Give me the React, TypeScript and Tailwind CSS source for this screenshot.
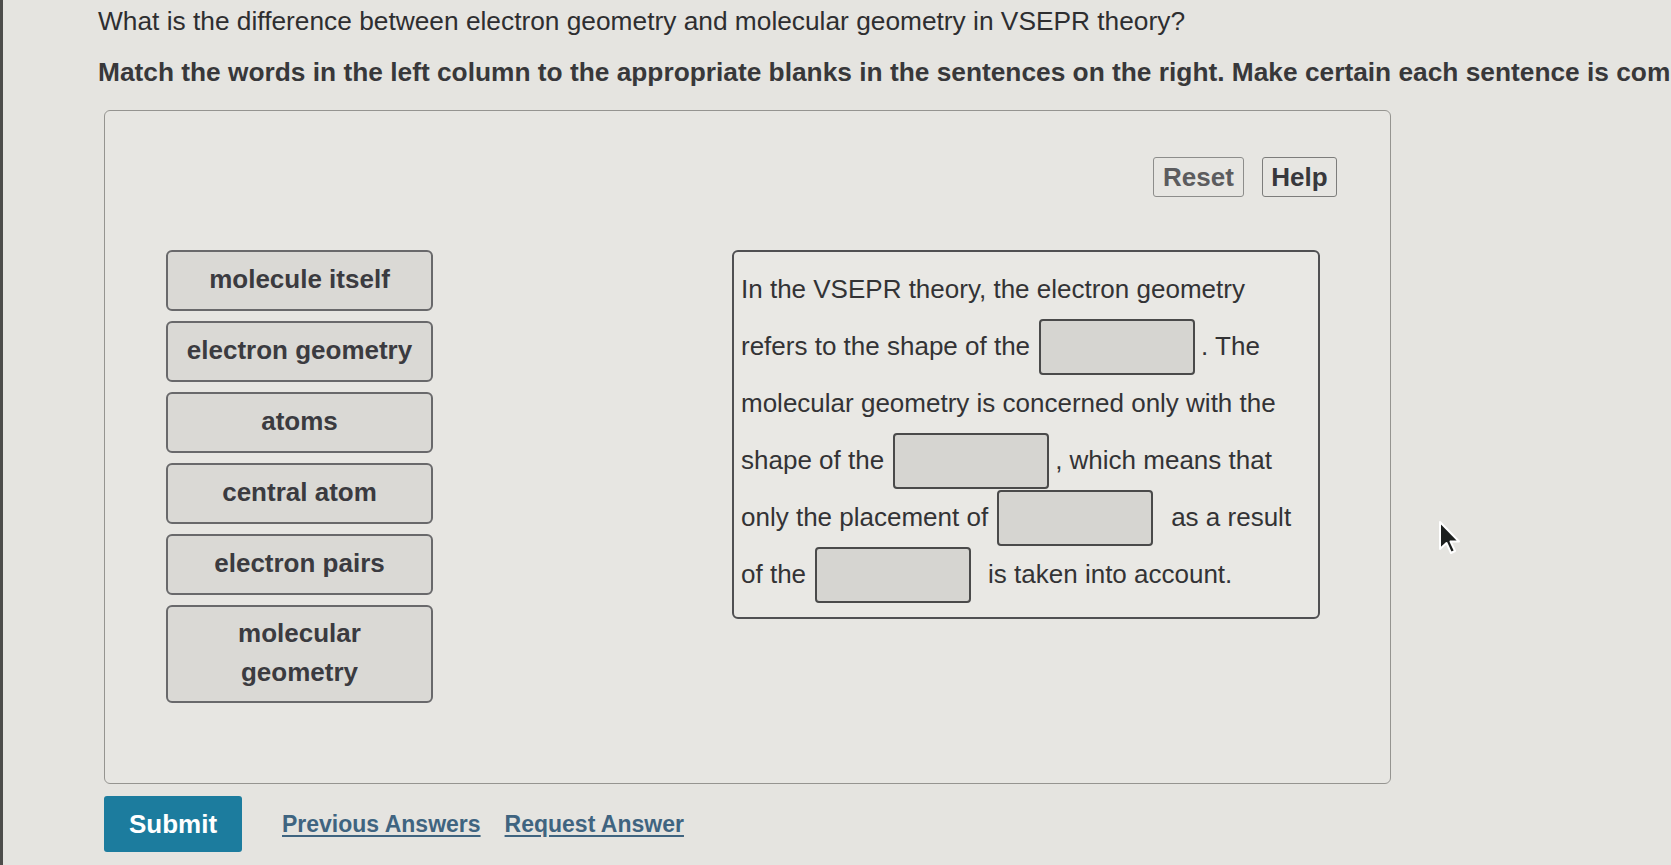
import React from 'react';

const items = ['molecule itself', 'electron geometry', 'atoms', 'central atom', 'electron pairs'];

function Blank({ after }: { after: number }) {
  return (
    <span
      className="ml-[9px] inline-block h-[56px] w-[156px] shrink-0 rounded-[4px] border-2 border-[#4a4a4a] bg-[#d6d5d1]"
      style={{ marginRight: after }}
    />
  );
}

function Line({ children }: { children: React.ReactNode }) {
  return <div className="flex h-[57px] items-center whitespace-pre">{children}</div>;
}

function Cursor() {
  return (
    <svg className="absolute left-[1434px] top-[520px]" width="26" height="38" viewBox="0 0 26 38">
      <path
        d="M3 2 L3 29 L9.5 23 L14 33 L18 31 L13.5 21.5 L22 21.5 Z"
        fill="#1c1f1e"
        stroke="#ffffff"
        strokeWidth="2"
        strokeLinejoin="round"
      />
    </svg>
  );
}

export default function App() {
  return (
    <div
      className="relative h-[865px] w-[1671px] overflow-hidden border-l-[3px] border-[#4d4d4b] bg-[#e5e4e0] text-[#2e2e30]"
      style={{ fontFamily: '"Liberation Sans", Arial, sans-serif' }}
    >
      <div className="pl-[95px] pt-[6px]">
        <h1 className="whitespace-nowrap text-[26.3px] leading-[30px]">
          What is the difference between electron geometry and molecular geometry in VSEPR theory?
        </h1>
        <p className="mt-[21px] whitespace-nowrap text-[26.3px] font-bold leading-[30px] text-[#38383a]">
          Match the words in the left column to the appropriate blanks in the sentences on the right. Make certain each sentence is complete before submitting your answer.
        </p>
      </div>

      <div className="ml-[101px] mt-[23px] h-[674px] w-[1287px] rounded-md border-[1.5px] border-[#959490] bg-[#e7e6e2]">
        <div className="flex justify-end gap-[18px] pr-[53px] pt-[46px]">
          <button className="h-[40px] w-[91px] rounded-[3px] border-[1.5px] border-[#8d8d8b] text-[26px] font-bold text-[#5c5c5e]">
            Reset
          </button>
          <button className="h-[40px] w-[75px] rounded-[3px] border-[1.5px] border-[#7d7d7b] text-[26px] font-bold text-[#38383c]">
            Help
          </button>
        </div>

        <div className="mt-[53px] flex pl-[61px]">
          <div className="flex w-[267px] flex-col gap-[10px]">
            {items.map((t) => (
              <div
                key={t}
                className="flex h-[61px] items-center justify-center rounded-md border-2 border-[#69696b] bg-[#dad9d5] pb-[2px] text-[26px] font-bold text-[#3b3b40]"
              >
                {t}
              </div>
            ))}
            <div className="flex h-[98px] flex-col items-center justify-center rounded-md border-2 border-[#69696b] bg-[#dad9d5] pb-[2px] text-[26px] font-bold leading-[39px] text-[#3b3b40]">
              <span>molecular</span>
              <span>geometry</span>
            </div>
          </div>

          <div className="ml-[299px] h-[369px] w-[588px] rounded-md border-2 border-[#505052] bg-[#e9e8e4] pl-[7px] pt-[9px] text-[26px] text-[#333335]">
            <Line>In the VSEPR theory, the electron geometry</Line>
            <Line>
              refers to the shape of the
              <Blank after={6} />. The
            </Line>
            <Line>molecular geometry is concerned only with the</Line>
            <Line>
              shape of the
              <Blank after={6} />, which means that
            </Line>
            <Line>
              only the placement of
              <Blank after={18} />as a result
            </Line>
            <Line>
              of the
              <Blank after={17} />is taken into account.
            </Line>
          </div>
        </div>
      </div>

      <div className="ml-[101px] mt-[12px] flex items-center">
        <button className="h-[56px] w-[138px] rounded-[3px] bg-[#1c7c9e] text-[26px] font-bold text-white">
          Submit
        </button>
        <a className="ml-[40px] text-[23px] font-bold text-[#3f6480] underline underline-offset-[3px]" href="#">
          Previous Answers
        </a>
        <a className="ml-[24px] text-[23px] font-bold text-[#3f6480] underline underline-offset-[3px]" href="#">
          Request Answer
        </a>
      </div>

      <Cursor />
    </div>
  );
}
